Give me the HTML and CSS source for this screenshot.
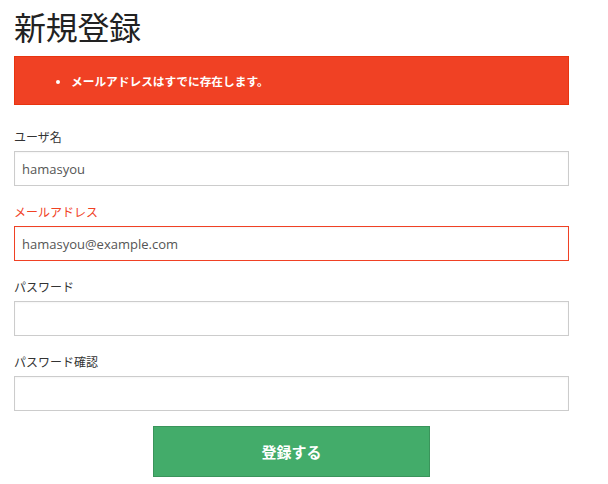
FILE: index.html
```html
<!DOCTYPE html>
<html lang="ja">
<head>
<meta charset="utf-8">
<title>新規登録</title>
<link rel="stylesheet" href="styles.css">
</head>
<body>
<div class="page">
  <h1 class="title">新規登録</h1>
  <div class="alert">
    <ul class="alert-list">
      <li>メールアドレスはすでに存在します。</li>
    </ul>
  </div>
  <form class="form">
    <div class="field">
      <label class="label">ユーザ名</label>
      <input class="input" type="text" value="hamasyou">
    </div>
    <div class="field">
      <label class="label label-error">メールアドレス</label>
      <input class="input input-error" type="text" value="hamasyou@example.com">
    </div>
    <div class="field">
      <label class="label">パスワード</label>
      <input class="input" type="password">
    </div>
    <div class="field">
      <label class="label">パスワード確認</label>
      <input class="input" type="password">
    </div>
    <div class="actions">
      <button class="button" type="button">登録する</button>
    </div>
  </form>
</div>
</body>
</html>
```

FILE: styles.css
```css
* { box-sizing: border-box; }
html, body { margin: 0; padding: 0; background: #fff; }
body {
  font-family: "Open Sans", "Noto Sans CJK JP", sans-serif;
  color: #222;
}
.page {
  width: 555px;
  margin-left: 14px;
  padding-top: 8px;
}
.title {
  margin: 0;
  font-size: 32px;
  line-height: 40px;
  font-weight: 400;
  color: #222;
  letter-spacing: -0.3px;
}
.alert {
  margin-top: 8px;
  height: 49px;
  background: #f04124;
  border: 1px solid #e8340f;
  display: flex;
  align-items: center;
}
.alert-list {
  margin: 0;
  padding-left: 56px;
  color: #fff;
  font-size: 11.7px;
  font-weight: 700;
  line-height: 18px;
}
.form { margin-top: 24px; }
.field { margin-bottom: 18px; }
.label {
  display: block;
  font-size: 12px;
  line-height: 18px;
  color: #333;
  margin-bottom: 4px;
}
.label-error { color: #f04124; }
.input {
  display: block;
  width: 100%;
  height: 35px;
  padding: 0 7px;
  border: 1px solid #cccccc;
  background: #fff;
  font-family: "Open Sans", "Noto Sans CJK JP", sans-serif;
  font-size: 13px;
  color: #555;
  outline: none;
  box-shadow: inset 0 1px 2px rgba(0,0,0,0.04);
}
.input-error { border-color: #f04124; }
.actions {
  display: flex;
  justify-content: center;
  margin-top: -3px;
}
.button {
  width: 277px;
  height: 51px;
  background: #43ac6a;
  border: 1px solid #3a945b;
  color: #fff;
  font-family: "Open Sans", "Noto Sans CJK JP", sans-serif;
  font-size: 15px;
  font-weight: 700;
  cursor: pointer;
}
```
